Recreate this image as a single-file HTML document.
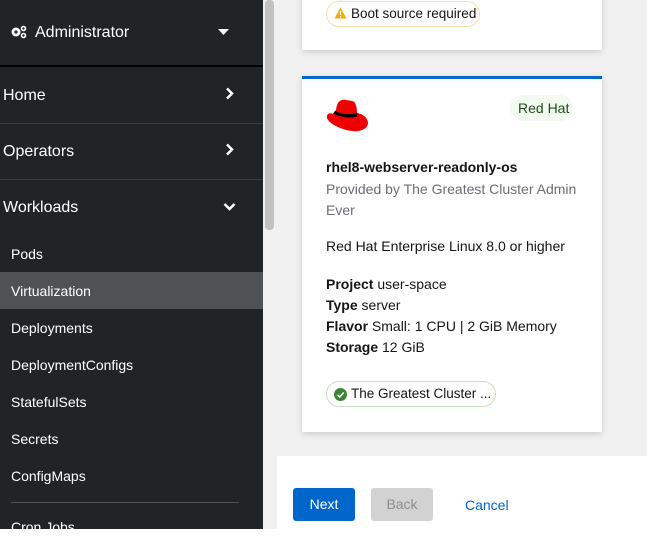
<!DOCTYPE html>
<html><head><style>
*{box-sizing:border-box;margin:0;padding:0}
body{width:647px;height:529px;overflow:hidden;font-family:"Liberation Sans",sans-serif;background:#fff;position:relative}
.sb{position:absolute;left:0;top:0;width:263px;height:529px;background:#212427;color:#fff}
.abs{position:absolute}
.nav{position:absolute;left:3px;font-size:16px;color:#fff;line-height:20px}
.sub{position:absolute;left:11px;font-size:14px;color:#fff;line-height:18px}
.sep{position:absolute;left:0;width:263px;height:1px;background:#3c3f42}
.card{position:absolute;left:302px;width:300px;background:#fff;box-shadow:0 2px 6px rgba(0,0,0,.15)}
.t{position:absolute;left:326px;font-size:14px;line-height:18px;color:#151515}
</style></head><body>
<div class="sb">
  <svg class="abs" style="left:10px;top:25px" width="17" height="14" viewBox="0 0 17 14"><circle cx="6" cy="7" r="4.5" fill="#fff"/><circle cx="6" cy="7" r="1.6" fill="#212427"/><circle cx="13.5" cy="3.5" r="2" fill="none" stroke="#fff" stroke-width="1.6"/><circle cx="13.5" cy="10.5" r="2" fill="none" stroke="#fff" stroke-width="1.6"/></svg>
  <div class="abs" style="left:35px;top:23px;font-size:16px;line-height:20px">Administrator</div>
  <svg class="abs" style="left:218px;top:29px" width="11" height="7"><path d="M0 0H11L5.5 6Z" fill="#fff"/></svg>
  <div class="abs" style="left:0;top:65px;width:263px;height:2px;background:#000"></div>
  <div class="nav" style="top:86px">Home</div>
  <svg class="abs" style="left:225px;top:87px" width="9" height="13"><path d="M2 1.5L7 6.5L2 11.5" fill="none" stroke="#fff" stroke-width="2.5"/></svg>
  <div class="sep" style="top:123px"></div>
  <div class="nav" style="top:142px">Operators</div>
  <svg class="abs" style="left:225px;top:143px" width="9" height="13"><path d="M2 1.5L7 6.5L2 11.5" fill="none" stroke="#fff" stroke-width="2.5"/></svg>
  <div class="sep" style="top:179px"></div>
  <div class="nav" style="top:198px">Workloads</div>
  <svg class="abs" style="left:223px;top:202px" width="13" height="9"><path d="M1.5 2L6.5 7L11.5 2" fill="none" stroke="#fff" stroke-width="2.5"/></svg>
  <div class="sub" style="top:245px">Pods</div>
  <div class="abs" style="left:0;top:272px;width:263px;height:37px;background:#4f5255"></div>
  <div class="sub" style="top:282px">Virtualization</div>
  <div class="sub" style="top:319px">Deployments</div>
  <div class="sub" style="top:356px">DeploymentConfigs</div>
  <div class="sub" style="top:393px">StatefulSets</div>
  <div class="sub" style="top:430px">Secrets</div>
  <div class="sub" style="top:467px">ConfigMaps</div>
  <div class="abs" style="left:11px;top:502px;width:228px;height:1px;background:#4f5255"></div>
  <div class="sub" style="top:518px">Cron Jobs</div>
</div>
<div class="abs" style="left:263px;top:0;width:14px;height:529px;background:#f0f0f0"></div>
<div class="abs" style="left:265px;top:0;width:9px;height:230px;background:#c1c1c1;border-radius:4px"></div>
<div class="abs" style="left:277px;top:0;width:370px;height:456px;background:#f0f0f0"></div>
<div class="card" style="top:-10px;height:60px"></div>
<div class="abs" style="left:326px;top:1px;width:154px;height:26px;border:1px solid #f4e2a6;border-radius:13px;background:#fff"></div>
<svg class="abs" style="left:334px;top:7px" width="13" height="12"><path d="M6.5 0.5L12.5 11.5H0.5Z" fill="#f0ab00"/><rect x="5.8" y="4" width="1.4" height="4" fill="#fff"/><rect x="5.8" y="9" width="1.4" height="1.4" fill="#fff"/></svg>
<div class="t" style="left:351px;top:5px;color:#151515;font-size:13.5px">Boot source required</div>
<div class="card" style="top:76px;height:356px;border-top:3px solid #06c"></div>
<svg class="abs" style="left:326px;top:98px" width="43" height="35" viewBox="0 0 43 35"><path d="M10 12C11 3 15 1 20 2C24 3 27 2 29 5C31 9 31 13 31 15C37 16 42 20 42 25C42 31 34 34 26 33C16 32 3 26 1 20C0 16 4 14 7 16Z" fill="#e00"/><path d="M7 15.5C12 18 22 21 31 18.5L31.5 15C24 17 14 16 9 13Z" fill="#000"/></svg>
<div class="abs" style="left:510px;top:95px;width:63px;height:26px;border-radius:13px;background:#f3faf2"></div>
<div class="t" style="left:518px;top:99px;color:#1e4f18">Red Hat</div>
<div class="t" style="top:158px;font-weight:bold">rhel8-webserver-readonly-os</div>
<div class="t" style="top:179px;color:#6a6e73;line-height:21px">Provided by The Greatest Cluster Admin<br>Ever</div>
<div class="t" style="top:237px">Red Hat Enterprise Linux 8.0 or higher</div>
<div class="t" style="top:274px;line-height:21px"><b>Project</b> user-space<br><b>Type</b> server<br><b>Flavor</b> Small: 1 CPU | 2 GiB Memory<br><b>Storage</b> 12 GiB</div>
<div class="abs" style="left:326px;top:381px;width:170px;height:26px;border:1px solid #c8dfc1;border-radius:13px"></div>
<svg class="abs" style="left:334px;top:388px" width="13" height="13"><circle cx="6.5" cy="6.5" r="6.5" fill="#3e8635"/><path d="M3.5 6.8L5.7 9L9.7 4.5" fill="none" stroke="#fff" stroke-width="1.6"/></svg>
<div class="t" style="left:351px;top:385px;color:#151515;font-size:13.5px">The Greatest Cluster ...</div>
<div class="abs" style="left:293px;top:488px;width:62px;height:33px;background:#06c;border-radius:3px;color:#fff;font-size:14px;line-height:33px;text-align:center">Next</div>
<div class="abs" style="left:371px;top:488px;width:62px;height:33px;background:#d2d2d2;border-radius:3px;color:#8a8d90;font-size:14px;line-height:33px;text-align:center">Back</div>
<div class="abs" style="left:465px;top:489px;font-size:14px;line-height:33px;color:#06c">Cancel</div>
</body></html>
